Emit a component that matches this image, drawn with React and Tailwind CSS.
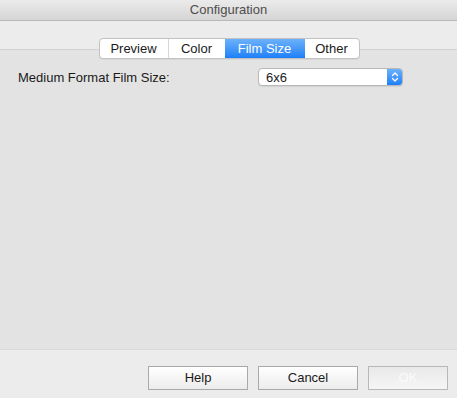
export default function App() {
  const font = { fontFamily: '"Helvetica Neue", "Liberation Sans", Arial, sans-serif' };
  return (
    <div className="w-[457px] h-[398px] bg-[#ececec] flex flex-col overflow-hidden text-[13px] text-[#1a1a1a]" style={font}>
      <div className="h-[21px] shrink-0 bg-gradient-to-b from-[#ebebeb] to-[#d5d5d5] border-b border-[#b9b9b9] flex items-center justify-center text-[13px] text-[#4d4d4d]">
        Configuration
      </div>
      <div className="relative z-10 flex justify-center mt-[17px] pl-[1px]">
        <div className="flex h-[21px] w-[261px] rounded-[4px] border border-[#c2c2c2] bg-white overflow-hidden shadow-[0_1px_0_rgba(0,0,0,0.05)]">
          <div className="w-[69px] flex items-center justify-center border-r border-[#d8d8d8]">Preview</div>
          <div className="w-[56px] flex items-center justify-center">Color</div>
          <div className="w-[80px] flex items-center justify-center bg-gradient-to-b from-[#6bb1fa] to-[#1a7ff9] text-white">Film Size</div>
          <div className="flex-1 flex items-center justify-center">Other</div>
        </div>
      </div>
      <div className="-mt-[10px] h-[301px] shrink-0 bg-[#e3e3e3] border-t border-[#d2d2d2] border-b border-b-[#dadada]">
        <div className="flex items-center mt-[17px] pl-[18px]">
          <div className="w-[240px] pt-[1px]">Medium Format Film Size:</div>
          <div className="flex h-[18px] w-[145px] rounded-[4px] border border-[#b8b8b8] bg-white overflow-hidden shadow-[0_1px_1px_rgba(0,0,0,0.08)]">
            <div className="flex-1 flex items-center pl-[7px]">6x6</div>
            <div className="w-[15px] flex items-center justify-center bg-gradient-to-b from-[#6bb1fa] to-[#1a7ff9]">
              <svg width="8" height="12" viewBox="0 0 8 12" fill="none" stroke="white" strokeWidth="1.4" strokeLinecap="round" strokeLinejoin="round">
                <path d="M1.5 4.5 L4 2 L6.5 4.5" />
                <path d="M1.5 7.5 L4 10 L6.5 7.5" />
              </svg>
            </div>
          </div>
        </div>
      </div>
      <div className="flex pt-[16px] pl-[148px] gap-[10px]">
        <button className="w-[100px] h-[24px] border border-[#a9a9a9] bg-gradient-to-b from-[#ffffff] to-[#ececec] flex items-center justify-center text-[13px] text-[#1a1a1a]">Help</button>
        <button className="w-[100px] h-[24px] border border-[#a9a9a9] bg-gradient-to-b from-[#ffffff] to-[#ececec] flex items-center justify-center text-[13px] text-[#1a1a1a]">Cancel</button>
        <button className="w-[80px] h-[24px] border border-[#b8b8b8] bg-gradient-to-b from-[#e9e9e9] to-[#f6f6f6] flex items-center justify-center text-[13px] text-[#fbfbfb]">OK</button>
      </div>
    </div>
  );
}
